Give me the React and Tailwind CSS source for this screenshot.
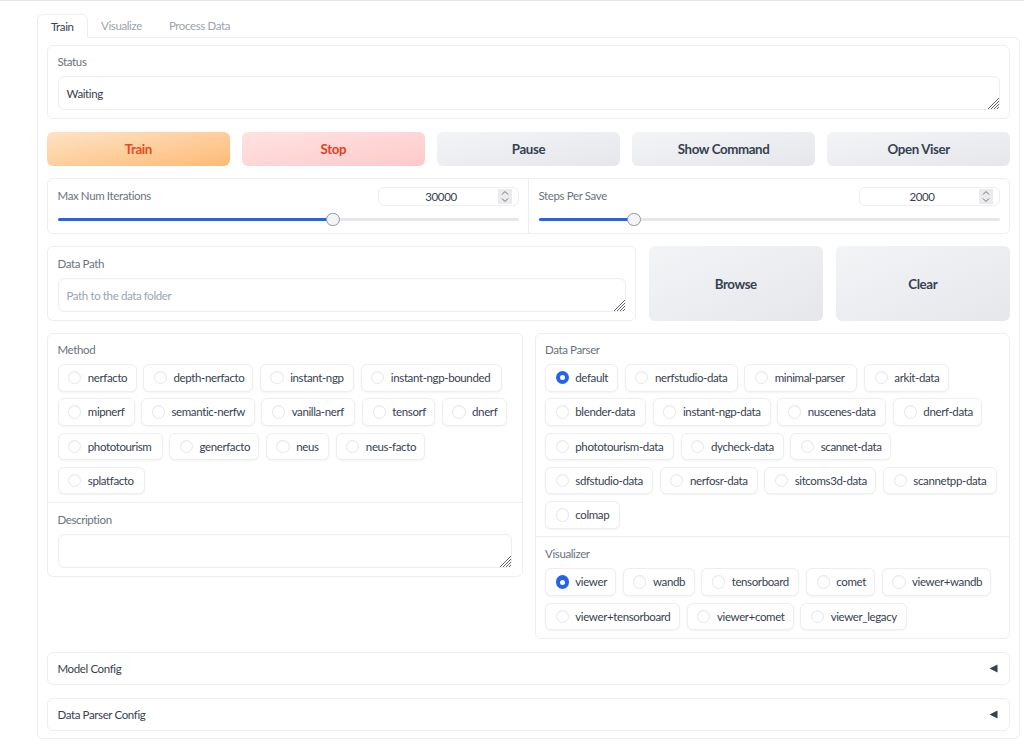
import { useState } from "react";

const fontClass = "font-['Lato',sans-serif] tracking-[-0.38px]";

const methods = [
  { name: "nerfacto", width: "w-[79px]" },
  { name: "depth-nerfacto", width: "w-[110px]" },
  { name: "instant-ngp", width: "w-[94px]" },
  { name: "instant-ngp-bounded", width: "w-[141px]" },
  { name: "mipnerf", width: "w-[77px]" },
  { name: "semantic-nerfw", width: "w-[113.5px]" },
  { name: "vanilla-nerf", width: "w-[94px]" },
  { name: "tensorf", width: "w-[73px]" },
  { name: "dnerf", width: "w-[65px]" },
  { name: "phototourism", width: "w-[105px]" },
  { name: "generfacto", width: "w-[90px]" },
  { name: "neus", width: "w-[63px]" },
  { name: "neus-facto", width: "w-[89px]" },
  { name: "splatfacto", width: "w-[87px]" },
];

const parsers = [
  { name: "default", width: "w-[73px]" },
  { name: "nerfstudio-data", width: "w-[113px]" },
  { name: "minimal-parser", width: "w-[113px]" },
  { name: "arkit-data", width: "w-[85px]" },
  { name: "blender-data", width: "w-[101px]" },
  { name: "instant-ngp-data", width: "w-[118px]" },
  { name: "nuscenes-data", width: "w-[109px]" },
  { name: "dnerf-data", width: "w-[89px]" },
  { name: "phototourism-data", width: "w-[129px]" },
  { name: "dycheck-data", width: "w-[103px]" },
  { name: "scannet-data", width: "w-[101px]" },
  { name: "sdfstudio-data", width: "w-[108px]" },
  { name: "nerfosr-data", width: "w-[98px]" },
  { name: "sitcoms3d-data", width: "w-[112px]" },
  { name: "scannetpp-data", width: "w-[114px]" },
  { name: "colmap", width: "w-[75px]" },
];

const visualizers = [
  { name: "viewer", width: "w-[71px]" },
  { name: "wandb", width: "w-[72px]" },
  { name: "tensorboard", width: "w-[98px]" },
  { name: "comet", width: "w-[69px]" },
  { name: "viewer+wandb", width: "w-[109px]" },
  { name: "viewer+tensorboard", width: "w-[135px]" },
  { name: "viewer+comet", width: "w-[107px]" },
  { name: "viewer_legacy", width: "w-[107px]" },
];

function Label({ children }) {
  return <p className="h-[21px] text-[11.5px] leading-[14px] text-[#6b7280]">{children}</p>;
}

function Chip({ option, selected, onSelect }) {
  return (
    <button
      type="button"
      onClick={() => onSelect(option.name)}
      className={`flex h-[27.6px] shrink-0 items-center rounded-[6px] border border-[#eceef1] bg-white pl-[9.5px] shadow-[0_1px_2px_rgba(0,0,0,0.05)] ${option.width}`}
    >
      {selected ? (
        <span className="flex h-[13.3px] w-[13.3px] shrink-0 items-center justify-center rounded-full bg-[#2563eb]">
          <span className="h-[5px] w-[5px] rounded-full bg-white" />
        </span>
      ) : (
        <span className="h-[13.3px] w-[13.3px] shrink-0 rounded-full border border-[#e5e7eb] bg-white shadow-[inset_0_1px_1px_rgba(0,0,0,0.04)]" />
      )}
      <span className="ml-[6.5px] whitespace-nowrap text-[11.5px] text-[#374151]">{option.name}</span>
    </button>
  );
}

function RadioBlock({ label, options, value, onChange, spacing }) {
  return (
    <div className={`px-[9.5px] ${spacing}`}>
      <Label>{label}</Label>
      <div className="flex flex-wrap gap-x-[6.7px] gap-y-[6.7px]">
        {options.map((option) => (
          <Chip key={option.name} option={option} selected={value === option.name} onSelect={onChange} />
        ))}
      </div>
    </div>
  );
}

function ActionButton({ children, className }) {
  return (
    <button type="button" className={`flex items-center justify-center rounded-[6px] pt-[2px] text-[13.3px] font-bold ${className}`}>
      {children}
    </button>
  );
}

function SliderField({ label, value, percent, className }) {
  return (
    <div className={`flex-1 px-[9.5px] pt-[8px] ${className}`}>
      <div className="flex items-start justify-between">
        <span className="pt-[2px] text-[11.5px] leading-[14px] text-[#6b7280]">{label}</span>
        <div className="relative flex h-[19px] w-[141px] items-center justify-center rounded-[6px] border border-[#eceef1] pr-[14px] text-[11.5px] text-[#374151]">
          {value}
          <span className="absolute right-[6px] top-[1px] flex h-[15px] w-[14px] items-center justify-center bg-[#ebebee]">
            <svg width="8" height="13" viewBox="0 0 8 13" fill="none" stroke="#6b7280" strokeWidth="1">
              <path d="M1 4.5 4 1.5 7 4.5" />
              <path d="M1 8.5 4 11.5 7 8.5" />
            </svg>
          </span>
        </div>
      </div>
      <div className="relative mt-[11.5px] h-[3.4px] rounded-full bg-[#e5e7eb]">
        <div className="h-full rounded-full bg-[#2563eb]" style={{ width: `${percent}%` }} />
        <span
          className="absolute top-[-5px] ml-[-6.7px] h-[13.4px] w-[13.4px] rounded-full border border-[#8f96a3] bg-[#f3f4f6]"
          style={{ left: `${percent}%` }}
        />
      </div>
    </div>
  );
}

function TextBox({ value, placeholder }) {
  return (
    <div className="relative">
      <textarea
        readOnly
        value={value}
        placeholder={placeholder}
        className="block h-[34px] w-full resize-none rounded-[6px] border border-[#eceef1] bg-white px-[8px] pb-[7px] pt-[9px] text-[11.5px] leading-[16px] text-[#374151] shadow-[inset_0_1px_2px_rgba(0,0,0,0.02)] outline-none placeholder:text-[#9ca3af]"
      />
      <svg className="absolute bottom-[0px] right-[0px]" width="13" height="13" viewBox="0 0 13 13" stroke="#5f6672" strokeWidth="1">
        <path d="M1 12 12 1M4 12 12 4M7 12 12 7M10 12 12 10" />
      </svg>
    </div>
  );
}

function Accordion({ title }) {
  return (
    <div className="flex h-[33.5px] items-center justify-between rounded-[6px] border border-[#eceef1] pl-[9.5px] pr-[11px] text-[11.5px] text-[#374151]">
      <span className="pt-[1px]">{title}</span>
      <svg width="9" height="9" viewBox="0 0 9 9" fill="#374151">
        <path d="M0.5 4.5 8.5 0.5V8.5Z" />
      </svg>
    </div>
  );
}

export default function App() {
  const [tab, setTab] = useState("Train");
  const [method, setMethod] = useState("");
  const [parser, setParser] = useState("default");
  const [visualizer, setVisualizer] = useState("viewer");

  return (
    <div className={`min-h-[745px] border-t border-t-[#e5e7eb] bg-white pl-[37px] pr-[4px] pt-[13px] ${fontClass}`}>
      <div className="relative z-10 flex h-[24px] items-stretch">
        {["Train", "Visualize", "Process Data"].map((name) => (
          <button
            key={name}
            type="button"
            onClick={() => setTab(name)}
            className={
              tab === name
                ? "w-[50.5px] rounded-t-[6px] border border-b-0 border-[#eceef1] bg-white text-[11.5px] text-[#374151]"
                : "px-[13.5px] text-[11.5px] text-[#9ca3af]"
            }
          >
            {name}
          </button>
        ))}
      </div>

      <div className="mt-[-1px] flex h-[702px] flex-col rounded-b-[6px] rounded-tr-[6px] border border-[#eceef1] px-[9px] pt-[7px]">
        <div className="h-[74px] rounded-[6px] border border-[#eceef1] px-[9.5px] pt-[9px]">
          <Label>Status</Label>
          <TextBox value="Waiting" />
        </div>

        <div className="mt-[13px] grid h-[33.5px] grid-cols-5 gap-x-[12.5px]">
          <ActionButton className="bg-linear-to-br from-[#fde3c4] to-[#fdba74] text-[#ea4a1c]">Train</ActionButton>
          <ActionButton className="bg-linear-to-br from-[#fee2e2] to-[#fecaca] text-[#e3401c]">Stop</ActionButton>
          <ActionButton className="bg-linear-to-br from-[#f3f4f6] to-[#e5e7eb] text-[#374151]">Pause</ActionButton>
          <ActionButton className="bg-linear-to-br from-[#f3f4f6] to-[#e5e7eb] text-[#374151]">Show Command</ActionButton>
          <ActionButton className="bg-linear-to-br from-[#f3f4f6] to-[#e5e7eb] text-[#374151]">Open Viser</ActionButton>
        </div>

        <div className="mt-[12.5px] flex h-[55.5px] rounded-[6px] border border-[#eceef1]">
          <SliderField label="Max Num Iterations" value="30000" percent={59.8} className="border-r border-r-[#eceef1]" />
          <SliderField label="Steps Per Save" value="2000" percent={20.7} />
        </div>

        <div className="mt-[12.5px] flex h-[75px] gap-x-[12.5px]">
          <div className="w-[589px] rounded-[6px] border border-[#eceef1] px-[9.5px] pt-[10px]">
            <Label>Data Path</Label>
            <TextBox value="" placeholder="Path to the data folder" />
          </div>
          <ActionButton className="flex-1 bg-linear-to-br from-[#f3f4f6] to-[#e5e7eb] text-[#374151]">Browse</ActionButton>
          <ActionButton className="flex-1 bg-linear-to-br from-[#f3f4f6] to-[#e5e7eb] text-[#374151]">Clear</ActionButton>
        </div>

        <div className="mt-[12px] grid grid-cols-[475.5px_1fr] items-start gap-x-[12px]">
          <div className="rounded-[6px] border border-[#eceef1]">
            <RadioBlock label="Method" options={methods} value={method} onChange={setMethod} spacing="pt-[9px] pb-[7.5px]" />
            <div className="border-t border-t-[#eceef1] px-[9.5px] pb-[8px] pt-[10px]">
              <Label>Description</Label>
              <TextBox value="" />
            </div>
          </div>
          <div className="rounded-[6px] border border-[#eceef1]">
            <RadioBlock label="Data Parser" options={parsers} value={parser} onChange={setParser} spacing="pt-[9px] pb-[7.5px]" />
            <div className="border-t border-t-[#eceef1]">
              <RadioBlock label="Visualizer" options={visualizers} value={visualizer} onChange={setVisualizer} spacing="pt-[10px] pb-[7.5px]" />
            </div>
          </div>
        </div>

        <div className="mt-[13px] flex flex-col gap-y-[12.5px]">
          <Accordion title="Model Config" />
          <Accordion title="Data Parser Config" />
        </div>
      </div>
    </div>
  );
}
